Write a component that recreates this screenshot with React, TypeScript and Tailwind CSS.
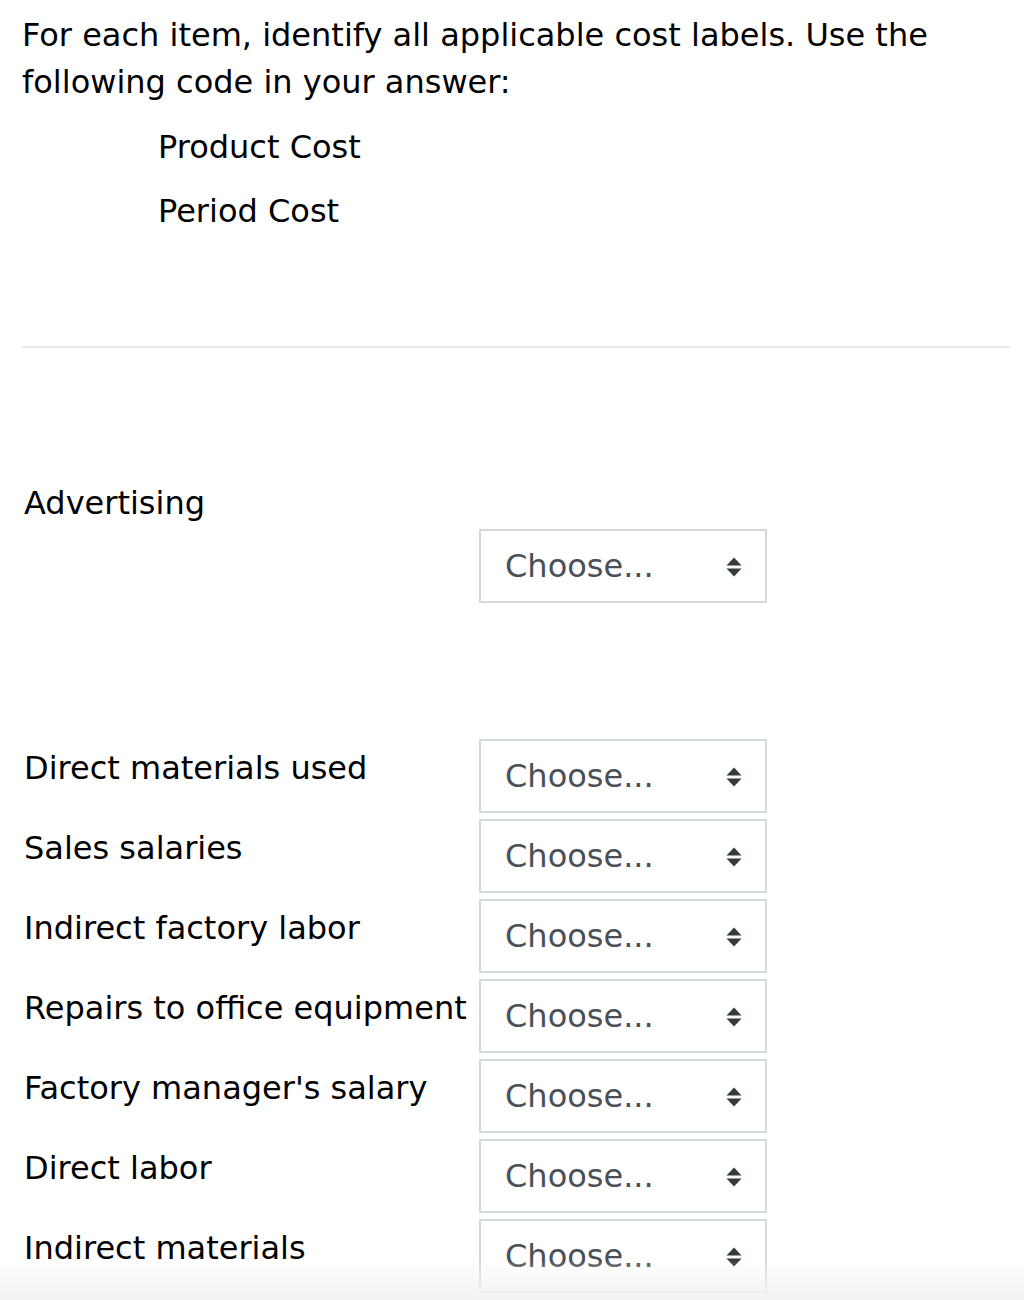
import React from 'react';

const items = [
  'Direct materials used',
  'Sales salaries',
  'Indirect factory labor',
  'Repairs to office equipment',
  "Factory manager's salary",
  'Direct labor',
  'Indirect materials',
];

const ChooseBox: React.FC = () => (
  <div className="flex h-[74px] w-[288px] shrink-0 items-center justify-between border-2 border-[#d4d9de] bg-white pl-[24px] pr-[23px] text-[#495057]">
    <span>Choose...</span>
    <svg width="16" height="20" viewBox="0 0 16 20" className="mt-[2px]">
      <path d="M8 0.5 L15.5 8.5 L0.5 8.5 Z" fill="#343a40" />
      <path d="M0.5 11.5 L15.5 11.5 L8 19.5 Z" fill="#343a40" />
    </svg>
  </div>
);

const App: React.FC = () => {
  return (
    <div
      className="relative min-h-[1300px] bg-white text-[32px] leading-[47px] text-black"
      style={{ fontFamily: '"DejaVu Sans", Verdana, sans-serif' }}
    >
      <div className="pl-[22px] pr-[14px] pt-[12px]">
        <p className="w-[940px]">
          For each item, identify all applicable cost labels. Use the following code in your answer:
        </p>
        <div className="mt-[9px] pl-[136px] leading-[64px]">
          <p>Product Cost</p>
          <p>Period Cost</p>
        </div>
        <hr className="mt-[103px] border-t-2 border-[#e9e9ef]" />
      </div>

      <div className="pl-[24px] pt-[132px]">
        <p>Advertising</p>
        <div className="ml-[455px] mt-[2px]">
          <ChooseBox />
        </div>
      </div>

      <div className="mt-[136px] flex flex-col gap-[6px] pl-[24px]">
        {items.map((label) => (
          <div key={label} className="flex">
            <div className="w-[455px] pt-[6px]">{label}</div>
            <ChooseBox />
          </div>
        ))}
      </div>

      <div className="pointer-events-none fixed bottom-0 left-0 h-[40px] w-full bg-gradient-to-b from-white/0 to-[#f2f2f2]" />
    </div>
  );
};

export default App;
